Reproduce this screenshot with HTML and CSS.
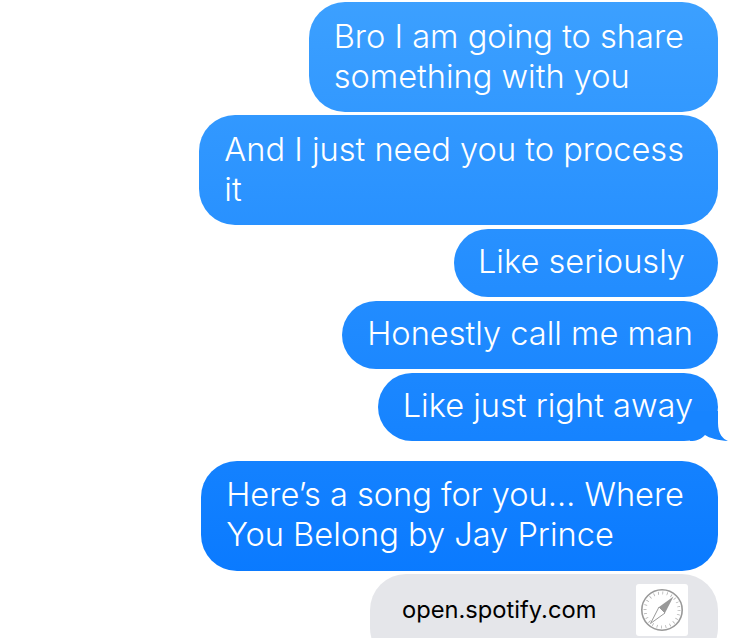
FILE: index.html
```html
<!DOCTYPE html>
<html lang="en">
<head>
  <meta charset="UTF-8">
  <title>Messages</title>
  <link rel="stylesheet" href="styles.css">
</head>
<body>
  <main class="thread">
    <div class="bubble wide two-line first">Bro I am going to share<br>something with you</div>
    <div class="bubble wide two-line">And I just need you to process<br>it</div>
    <div class="bubble wide short">Like seriously</div>
    <div class="bubble">Honestly call me man</div>
    <div class="bubble last">
      Like just right away
      <svg class="tail" viewBox="0 0 40 30" width="40" height="30">
        <path d="M0 30 C7 30 11 28 15 24 C19 27 29 29.5 38 30 C33 28 28 23 28 12 L28 0 L0 0 Z"/>
      </svg>
    </div>
    <div class="bubble wide two-line song">Here’s a song for you… Where<br>You Belong by Jay Prince</div>
    <div class="link-bubble">
      <span class="link-host">open.spotify.com</span>
      <span class="link-icon">
        <svg viewBox="0 0 52 52" width="52" height="52">
          <circle cx="26" cy="26" r="20.2" fill="none" stroke="#999" stroke-width="1.6"/>
          <circle cx="26" cy="26" r="17" fill="none" stroke="#aaa" stroke-width="3" stroke-dasharray="0.7 3.75"/>
          <path d="M37.5 12.5 L23 23 L29 29 Z" fill="#999"/>
          <path d="M14.5 39.5 L23 23 L29 29 Z" fill="#fff" stroke="#999" stroke-width="1"/>
        </svg>
      </span>
    </div>
  </main>
</body>
</html>
```

FILE: styles.css
```css
html, body {
  margin: 0;
  height: 638px;
  overflow: hidden;
  background: #fff;
}

.thread {
  display: flex;
  flex-direction: column;
  align-items: flex-end;
  gap: 4px;
  padding: 2px 32px 0 0;
  font-family: Inter, "Liberation Sans", sans-serif;
}

.bubble {
  position: relative;
  padding: 12px 25px 16px;
  border-radius: 36px;
  font-size: 32.6px;
  font-weight: 300;
  line-height: 40px;
  color: #fff;
  background: linear-gradient(to bottom, #3ca0ff 0, #0a7aff 575px) fixed;
}

.bubble.wide {
  padding-right: 34px;
}

.bubble.short {
  padding-left: 24px;
  padding-right: 33px;
}

.bubble.two-line {
  padding-top: 14px;
  padding-bottom: 16px;
}

.bubble.first {
  margin-bottom: -1px;
}

.bubble.last {
  margin-bottom: 16px;
}

.bubble.song {
  padding-top: 13px;
  padding-bottom: 17px;
  margin-bottom: -1px;
}

.tail {
  position: absolute;
  right: -12px;
  bottom: 0;
  fill: #1784ff;
}

.link-bubble {
  display: flex;
  align-items: center;
  justify-content: space-between;
  width: 348px;
  box-sizing: border-box;
  height: 90px;
  padding: 0 30px 18px 32px;
  border-radius: 36px;
  background: #e5e6ea;
  color: #000;
  font-size: 23.7px;
}

.link-host {
  margin-top: -2px;
}

.link-icon {
  display: flex;
  width: 52px;
  height: 52px;
  border-radius: 3px;
  background: #fff;
}
```
